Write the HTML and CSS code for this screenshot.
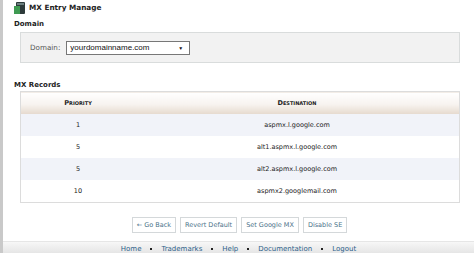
FILE: index.html
```html
<!DOCTYPE html>
<html>
<head>
    <title>MX Entry Manage</title>
    <meta charset="utf-8">
    <link rel="stylesheet" href="styles.css">
</head>
<body>
    <div class="page">
        <div class="content">
            <h1 class="title">
                <svg class="title-icon" width="12" height="12" viewBox="0 0 12 12">
                    <rect x="2" y="0" width="9" height="12" rx="1" fill="#2d3a3a"/>
                    <rect x="0" y="4" width="6" height="8" fill="#3f9a52"/>
                    <rect x="3" y="1" width="7" height="2" fill="#6b7f7f"/>
                </svg>
                MX Entry Manage
            </h1>

            <h2 class="section">Domain</h2>
            <div class="domain-box">
                <label class="domain-label">Domain:</label>
                <div class="select">
                    <span>yourdomainname.com</span>
                    <span class="arrow">&#9660;</span>
                </div>
            </div>

            <h2 class="section records">MX Records</h2>
            <table class="records-table">
                <thead>
                    <tr>
                        <th class="col-priority">Priority</th>
                        <th>Destination</th>
                    </tr>
                </thead>
                <tbody>
                    <tr class="odd"><td>1</td><td>aspmx.l.google.com</td></tr>
                    <tr><td>5</td><td>alt1.aspmx.l.google.com</td></tr>
                    <tr class="odd"><td>5</td><td>alt2.aspmx.l.google.com</td></tr>
                    <tr><td>10</td><td>aspmx2.googlemail.com</td></tr>
                </tbody>
            </table>

            <div class="buttons">
                <button class="btn">&larr; Go Back</button>
                <button class="btn">Revert Default</button>
                <button class="btn">Set Google MX</button>
                <button class="btn">Disable SE</button>
            </div>
        </div>

        <div class="footer">
            <a href="#">Home</a><span class="dot"></span>
            <a href="#">Trademarks</a><span class="dot"></span>
            <a href="#">Help</a><span class="dot"></span>
            <a href="#">Documentation</a><span class="dot"></span>
            <a href="#">Logout</a>
        </div>
    </div>
</body>
</html>
```

FILE: styles.css
```css
html, body {
    margin: 0;
    padding: 0;
    background-color: white;
}
body {
    font-family: "DejaVu Sans", Verdana, sans-serif;
    font-size: 7px;
    color: #333;
}
.page {
    width: 474px;
    height: 253px;
    border-left: 3px solid #c9c9c9;
    box-sizing: border-box;
    overflow: hidden;
}
.content {
    padding: 1px 14px 0 11px;
}
.title {
    display: flex;
    align-items: center;
    gap: 3px;
    margin: 0;
    font-size: 7.3px;
    font-weight: bold;
    color: #222;
    height: 13px;
}
.title-icon {
    display: block;
}
.section {
    margin: 5px 0 0 0;
    font-size: 7px;
    font-weight: bold;
    color: #222;
    height: 10px;
    line-height: 10px;
}
.domain-box {
    margin: 3px 0 0 6px;
    height: 29px;
    display: flex;
    align-items: center;
    background-color: #f2f2f2;
    border: 1px solid #d9dcdc;
    padding-left: 9px;
}
.domain-label {
    color: #555;
    font-size: 7.2px;
    margin-right: 6px;
}
.select {
    width: 124px;
    height: 14px;
    box-sizing: border-box;
    border: 1px solid #777;
    background-color: white;
    display: flex;
    align-items: center;
    justify-content: space-between;
    padding: 0 6px 0 3px;
    color: #111;
    font-family: "Liberation Sans", Arial, sans-serif;
    font-size: 8px;
}
.arrow {
    font-size: 5px;
}
.records {
    margin-top: 17px;
}
.records-table {
    margin: 1px 0 0 6px;
    width: 440px;
    border-collapse: collapse;
    border: 1px solid #dcdcdc;
}
.records-table th {
    height: 22px;
    font-variant: small-caps;
    font-size: 6.6px;
    font-weight: bold;
    color: #222;
    background: linear-gradient(to bottom, #ffffff 0%, #f7f3ef 55%, #e5d9cd 100%);
    padding: 0;
}
.col-priority {
    width: 114px;
}
.records-table td {
    height: 22px;
    padding: 0;
    text-align: center;
    font-size: 6.5px;
    color: #222;
}
.records-table tr.odd td {
    background-color: #f1f3f9;
}
.buttons {
    display: flex;
    justify-content: center;
    gap: 4px;
    margin-top: 14px;
    padding-left: 5px;
}
.btn {
    font-family: "DejaVu Sans", Verdana, sans-serif;
    font-size: 6.5px;
    color: #4a7289;
    background-color: white;
    border: 1px solid #d4d8da;
    padding: 0 4px;
    height: 16px;
    cursor: pointer;
}
.footer {
    margin-top: 8px;
    height: 13px;
    background: linear-gradient(to bottom, #f7f7f7 0%, #e2e2e2 100%);
    border-top: 1px solid #e6e6e6;
    display: flex;
    justify-content: center;
    align-items: center;
    font-size: 7px;
}
.footer a {
    color: #2d5f8a;
    text-decoration: none;
}
.dot {
    width: 2px;
    height: 2px;
    background-color: #222;
    margin: 0 9px;
}
```
